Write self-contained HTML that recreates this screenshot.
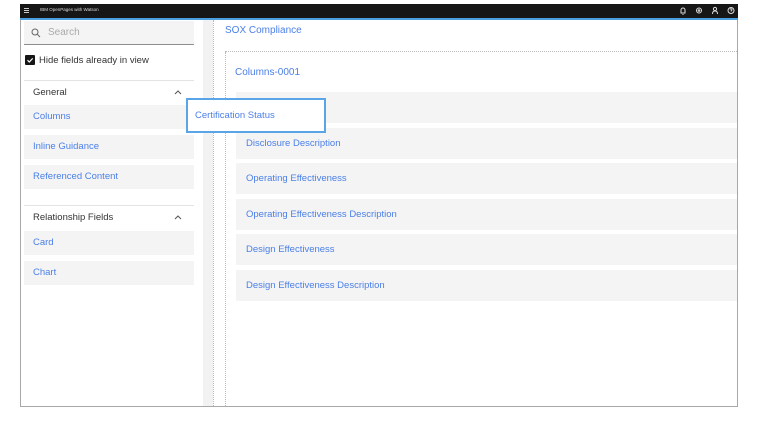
<!DOCTYPE html>
<html><head><style>
*{margin:0;padding:0;box-sizing:border-box}
body{width:757px;height:425px;background:#fff;font-family:"Liberation Sans",sans-serif;position:relative;overflow:hidden}
.a{position:absolute}
.frame{left:20px;top:4px;width:718px;height:403px;border:1px solid #a8a8a8;border-top:none}
.hdr{left:20px;top:4px;width:718px;height:14px;background:#161616}
.blue{left:20px;top:18px;width:718px;height:2px;background:#4a9fe0}
.lnk{color:#4a7fe8;font-size:9.5px}
.item{left:24px;width:170px;height:24px;background:#f4f4f4;padding-left:9px;line-height:24px}
.row{left:236px;width:501px;height:31px;background:#f4f4f4;padding-left:10px;line-height:31px}
.hd{left:24px;width:170px;height:25px;border-top:1px solid #e4e4e4;font-size:9.5px;color:#333;padding-left:9px;line-height:24px}
.chev{position:absolute;right:12px;top:9px}
</style></head><body>
<div class="a frame"></div>
<div class="a hdr"></div>
<div class="a" style="left:24px;top:8px;width:5px;height:1px;background:#ccc;box-shadow:0 2px 0 #ccc,0 4px 0 #ccc"></div>
<div class="a" style="left:40px;top:7px;font-size:4.5px;color:#ddd">IBM OpenPages with Watson</div>
<svg class="a" style="left:678px;top:6px" width="60" height="10" viewBox="0 0 60 10" fill="none" stroke="#ddd" stroke-width="1">
<path d="M3 7V4a2 2 0 0 1 4 0v3H2.5h5M4.5 8.5h1"/>
<circle cx="21" cy="4.5" r="2.5"/><circle cx="21" cy="4.5" r="0.8"/>
<circle cx="37" cy="3" r="1.6"/><path d="M34.5 8c0-2 1-3 2.5-3s2.5 1 2.5 3"/>
<circle cx="53" cy="4.5" r="3"/><path d="M52 3.5a1 1 0 1 1 1.2 1.2v0.8"/>
</svg>
<div class="a blue"></div>
<div class="a" style="left:203px;top:20px;width:10px;height:386px;background:#f2f2f2"></div>
<div class="a" style="left:213px;top:20px;height:386px;border-left:1px dotted #bbb"></div>
<div class="a" style="left:225px;top:52px;height:354px;border-left:1px dotted #bbb"></div>
<div class="a" style="left:225px;top:51px;width:512px;border-top:1px dotted #bbb"></div>
<div class="a" style="left:24px;top:21px;width:170px;height:24px;background:#f4f4f4;border-bottom:1px solid #8d8d8d"></div>
<svg class="a" style="left:31px;top:28px" width="10" height="10" viewBox="0 0 10 10"><circle cx="4" cy="4" r="3" fill="none" stroke="#666" stroke-width="1"/><line x1="6.2" y1="6.2" x2="9" y2="9" stroke="#666" stroke-width="1"/></svg>
<div class="a" style="left:48px;top:27px;font-size:10px;color:#aaa">Search</div>
<div class="a" style="left:25px;top:55px;width:10px;height:10px;background:#161616;border-radius:1px"></div>
<svg class="a" style="left:25px;top:55px" width="10" height="10" viewBox="0 0 10 10"><path d="M2.5 5.2l1.8 1.8 3.4-3.6" fill="none" stroke="#fff" stroke-width="1.2"/></svg>
<div class="a" style="left:39px;top:55px;font-size:9.5px;color:#333">Hide fields already in view</div>
<div class="a hd" style="top:80px">General<svg class="chev" width="8" height="5" viewBox="0 0 8 5"><path d="M1 4l3-3 3 3" fill="none" stroke="#555" stroke-width="1"/></svg></div>
<div class="a item lnk" style="top:105px">Columns</div>
<div class="a item lnk" style="top:135px">Inline Guidance</div>
<div class="a item lnk" style="top:165px">Referenced Content</div>
<div class="a hd" style="top:205px">Relationship Fields<svg class="chev" width="8" height="5" viewBox="0 0 8 5"><path d="M1 4l3-3 3 3" fill="none" stroke="#555" stroke-width="1"/></svg></div>
<div class="a item lnk" style="top:231px">Card</div>
<div class="a item lnk" style="top:261px">Chart</div>
<div class="a lnk" style="left:225px;top:25px;font-size:10px">SOX Compliance</div>
<div class="a lnk" style="left:235px;top:67px;font-size:10px">Columns-0001</div>
<div class="a row" style="top:92px"></div>
<div class="a row lnk" style="top:128px">Disclosure Description</div>
<div class="a row lnk" style="top:163px">Operating Effectiveness</div>
<div class="a row lnk" style="top:199px">Operating Effectiveness Description</div>
<div class="a row lnk" style="top:234px">Design Effectiveness</div>
<div class="a row lnk" style="top:270px">Design Effectiveness Description</div>
<div class="a lnk" style="left:186px;top:98px;width:140px;height:35px;border:2px solid #5aa5e6;background:#fff;padding-left:7px;line-height:31px">Certification Status</div>
</body></html>
